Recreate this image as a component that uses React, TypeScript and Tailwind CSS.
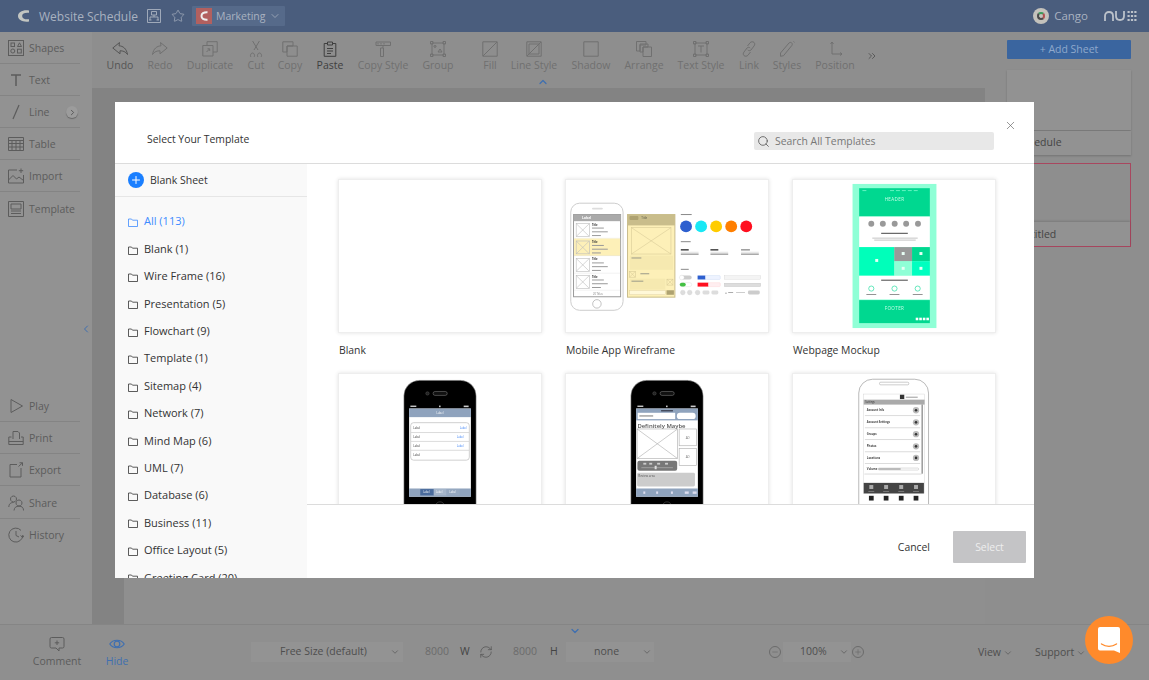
import React from 'react'
import { ChevronDown, ChevronRight, ChevronUp, ChevronLeft, ChevronsRight, Star, RefreshCw, X, Search, Plus, Minus } from 'lucide-react'

const sideTop = ['Shapes', 'Text', 'Line', 'Table', 'Import', 'Template']
const sideBottom = ['Play', 'Print', 'Export', 'Share', 'History']

const toolbar = [
  { label: 'Undo', w: 'w-[40px]', on: true },
  { label: 'Redo', w: 'w-[40px]' },
  { label: 'Duplicate', w: 'w-[60px]' },
  { label: 'Cut', w: 'w-[32px]' },
  { label: 'Copy', w: 'w-[36px]' },
  { label: 'Paste', w: 'w-[44px]', on: true, dark: true },
  { label: 'Copy Style', w: 'w-[62px]' },
  { label: 'Group', w: 'w-[48px]' },
  { label: 'Fill', w: 'w-[56px]' },
  { label: 'Line Style', w: 'w-[32px]' },
  { label: 'Shadow', w: 'w-[82px]' },
  { label: 'Arrange', w: 'w-[24px]' },
  { label: 'Text Style', w: 'w-[90px]' },
  { label: 'Link', w: 'w-[6px]' },
  { label: 'Styles', w: 'w-[70px]' },
  { label: 'Position', w: 'w-[26px]' },
]

const folders = ['All (113)', 'Blank (1)', 'Wire Frame (16)', 'Presentation (5)', 'Flowchart (9)', 'Template (1)', 'Sitemap (4)', 'Network (7)', 'Mind Map (6)', 'UML (7)', 'Database (6)', 'Business (11)', 'Office Layout (5)', 'Greeting Card (20)']

function SideIcon({ name }: { name: string }) {
  const p = { fill: 'none', stroke: 'currentColor', strokeWidth: 1 }
  return (
    <svg viewBox="0 0 16 16" className="w-4 h-4 shrink-0" {...p}>
      {name === 'Shapes' && (
        <>
          <rect x="0.5" y="0.5" width="15" height="15" />
          <rect x="3" y="3" width="3.5" height="3.5" />
          <path d="M11.5 2.8 L13.5 6.5 H9.5Z" />
          <circle cx="4.8" cy="11" r="2" />
          <rect x="9.5" y="9.2" width="3.8" height="3.8" />
        </>
      )}
      {name === 'Text' && <path d="M3 3 H13 M8 3 V14" strokeWidth="1.5" />}
      {name === 'Line' && <path d="M11 1 L5 15" strokeWidth="1.2" />}
      {name === 'Table' && <path d="M0.5 1.5 H15.5 V14.5 H0.5Z M0.5 4.5 H15.5 M0.5 7.5 H15.5 M0.5 11 H15.5 M4 4.5 V14.5 M8 4.5 V14.5 M12 4.5 V14.5" />}
      {name === 'Import' && <path d="M9 2 H0.5 V15 H15.5 V7 M0.5 12 L5 7.5 L8.5 11 L11 9 L15.5 12.5 M13 0.5 V5 M10.8 2.7 H15.2" />}
      {name === 'Template' && <path d="M0.5 0.5 H15.5 V15.5 H0.5Z M3 3 H13 V8 H3Z M3 10 H13 M3 12.5 H13" />}
      {name === 'Play' && <path d="M3 1.5 L14.5 8 L3 14.5Z" />}
      {name === 'Print' && <path d="M5 9 V1.5 H10 L11.5 3 V9 M3.5 7 H0.8 V14.5 H15.2 V7 H13 M0.8 11.5 H15.2" />}
      {name === 'Export' && <path d="M9 2.5 H2 V15 H13 V6 M10.5 4.5 L14.5 0.8 M11.5 0.8 H14.5 V3.8" />}
      {name === 'Share' && <path d="M5.5 1 a3 3 0 1 1 -0.01 0 M0.8 12 C1 8.5 3 7.5 5.5 7.5 M11 5 a3 3 0 1 1 -0.01 0 M6 15.5 C6.3 12.5 8 11.2 11 11.2 C14 11.2 15.4 12.5 15.6 15.5" />}
      {name === 'History' && <path d="M14.8 8 A7 7 0 1 1 13 3.4 M8 4 V8.5 L11 10 M12.5 8.5 L14.8 10.5 L16 8.5" />}
    </svg>
  )
}

function ToolIcon({ name }: { name: string }) {
  const p = { fill: 'none', stroke: 'currentColor', strokeWidth: 1 }
  return (
    <svg viewBox="0 0 16 16" className="w-4 h-4" {...p}>
      {name === 'Undo' && <path d="M0.8 7 L7.5 1.5 L7 4.8 C11 5 14.5 7.5 15.5 13.5 C13.5 10.5 11 9.8 8 9.8 L8 12.8Z" />}
      {name === 'Redo' && <path d="M15.2 7 L8.5 1.5 L9 4.8 C5 5 1.5 7.5 0.5 13.5 C2.5 10.5 5 9.8 8 9.8 L8 12.8Z" />}
      {name === 'Duplicate' && <path d="M5 4 V0.7 H15.2 V11 H11 M0.8 4.5 H11 V15 H0.8Z M4.5 11 L7.5 8 M5.5 7.8 H7.7 V10" />}
      {name === 'Cut' && <path d="M4 1 L10 11 M12 1 L6 11 M4.5 14 a2 2.5 0 1 0 0.01 0 M11.5 14 a2 2.5 0 1 0 0.01 0" transform="translate(0 -2)" />}
      {name === 'Copy' && <path d="M0.8 0.8 H11 V5 H5 V11 H0.8Z M5 5 H15.2 V15.2 H5Z" />}
      {name === 'Paste' && <path d="M5 2.5 H2.2 V15.3 H13.8 V2.5 H11 M5.5 1 H10.5 V4 H5.5Z M5 7.5 H11 M5 10 H11 M5 12.5 H9" />}
      {name === 'Copy Style' && <path d="M1 1 H15.5 V4.5 H1Z M3 2 V3.5 M6 2 V3.5 M9 2 V3.5 M8 4.5 V7 H5.5 V15.5 H8.5 V7" />}
      {name === 'Group' && <path d="M2 2 H14 V14 H2Z M0.5 0.5 H3 V3 H0.5Z M13 0.5 H15.5 V3 H13Z M0.5 13 H3 V15.5 H0.5Z M13 13 H15.5 V15.5 H13Z M5 4.5 a1 1 0 1 1 -0.01 0 M10 8 L12 11 H8Z" />}
      {name === 'Fill' && <path d="M0.8 0.8 H15.2 V15.2 H0.8Z M1 15 L15 1" />}
      {name === 'Line Style' && <path d="M0.8 0.8 H15.2 V15.2 H0.8Z M3 3 H13 V13 H3Z M1 15 L15 1" />}
      {name === 'Shadow' && <path d="M0.8 0.8 H15.2 V15.2 H0.8Z" />}
      {name === 'Arrange' && <path d="M0.5 0.5 H10 V4 H4 V10 H0.5Z M4 3 H12 V6 H7 V11 H4Z M7 6 H15.5 V15.5 H7Z" />}
      {name === 'Text Style' && <path d="M2 2 H14 V14 H2Z M0.5 0.5 H3 V3 H0.5Z M13 0.5 H15.5 V3 H13Z M0.5 13 H3 V15.5 H0.5Z M13 13 H15.5 V15.5 H13Z M5 5 H11 M8 5 V11.5" />}
      {name === 'Link' && <path d="M6.5 5 L9 1.8 C10 0.5 12 0.5 13 1.4 C14 2.3 14 3.8 13 5 L10 9 C9 10 7.5 9.8 6.8 9 M9.5 11 L7 14.2 C6 15.5 4 15.5 3 14.6 C2 13.7 2 12.2 3 11 L6 7 C7 6 8.5 6.2 9.2 7" />}
      {name === 'Styles' && <path d="M1.5 12 L10 2 C11 1 12.5 1.3 13 2.3 C13.5 3 13.3 4 12.7 4.7 L4.5 14.7 L1.5 15.3Z M14.5 0.5 L15.5 1.3" />}
      {name === 'Position' && <path d="M5 1 V13 H15 M3.5 3 L5 1 L6.5 3 M13 11.5 L15 13 L13 14.5" />}
    </svg>
  )
}

function Cross({ x, y, w, h, c = '#bbb' }: { x: number; y: number; w: number; h: number; c?: string }) {
  return (
    <g fill="none" stroke={c} strokeWidth="0.6">
      <rect x={x} y={y} width={w} height={h} />
      <path d={`M${x} ${y} L${x + w} ${y + h} M${x + w} ${y} L${x} ${y + h}`} />
    </g>
  )
}

function Lines({ x, y, w, c = '#999' }: { x: number; y: number; w: number[]; c?: string }) {
  return (
    <g fill={c}>
      {w.map((l, i) => (
        <rect key={i} x={x} y={y + i * 3.8} width={l} height="1" />
      ))}
    </g>
  )
}

const thumbClass = 'w-full h-full block blur-[0.35px]'

function WireThumb() {
  const rows = [41.7, 59.3, 77, 94.3]
  const colors = ['#2d5fcf', '#19e8f5', '#ffcc00', '#ff7f00', '#ff0f1f']
  return (
    <svg viewBox="0 0 204 154" className={thumbClass}>
      <rect x="4.5" y="23.5" width="53" height="108.5" rx="9" fill="#fff" stroke="#ccc" strokeWidth="1" />
      <rect x="26" y="28" width="11" height="2" rx="1" fill="#ddd" />
      <rect x="7.3" y="35" width="47.7" height="83.3" fill="#fff" stroke="#999" strokeWidth="1" />
      <rect x="7.3" y="35" width="47.7" height="6.7" fill="#aaa" />
      <text x="16" y="40" fontSize="3.4" fill="#fff" fontWeight="700">Label</text>
      {rows.map((y, i) => (
        <g key={y}>
          {i === 1 && <rect x="7.8" y={y} width="46.7" height="17.6" fill="#fdf0b8" />}
          <Cross x={10} y={y + 2.5} w={13.3} h={13} />
          <text x="26" y={y + 4.5} fontSize="2.6" fill="#333" fontWeight="700">Title</text>
          <Lines x={26} y={y + 6.5} w={[12, 16, 9]} />
          <path d={`M8 ${y + 17.4} H54.5`} stroke="#ddd" strokeWidth="0.4" />
        </g>
      ))}
      <text x="27" y="116.5" fontSize="2.6" fill="#777">20 Titles</text>
      <circle cx="31" cy="125.5" r="4.3" fill="#fff" stroke="#999" strokeWidth="0.6" />
      <rect x="62" y="35" width="48" height="83.7" fill="#fdf0b8" stroke="#c9bd8b" strokeWidth="1" />
      <rect x="62" y="35" width="48" height="11" fill="#c9bd8b" />
      <rect x="64" y="36.5" width="9" height="4" rx="1" fill="#aea271" />
      <text x="76" y="39.5" fontSize="3" fill="#554">Title</text>
      <Cross x={66} y={48.3} w={40} h={26.7} c="#d8cb97" />
      <rect x="64.3" y="76.7" width="43.7" height="14.3" fill="#f6e9b0" />
      <Lines x={66} y={78.5} w={[10]} c="#998" />
      <Cross x={64} y={92.5} w={6} h={6} c="#d8cb97" />
      <Lines x={75} y={94.5} w={[9]} c="#998" />
      <rect x="64.3" y="100" width="36" height="11" fill="#f6e9b0" />
      <Lines x={66} y={102} w={[12]} c="#998" />
      <Cross x={102} y={100.5} w={6} h={6} c="#d8cb97" />
      <rect x="64.3" y="111.7" width="36" height="4.6" fill="#fff8d8" stroke="#d8cb97" strokeWidth="0.4" />
      <rect x="101.5" y="111.7" width="7.5" height="4.6" fill="#aea271" />
      <Lines x={116} y={34.5} w={[11]} c="#888" />
      {colors.map((c, i) => (
        <circle key={c} cx={121.3 + i * 15.25} cy="47" r="6" fill={c} />
      ))}
      <Lines x={116} y={62} w={[10]} c="#888" />
      {[116, 146, 177].map((x, i) => (
        <g key={x}>
          <rect x={x} y="70" width={i === 2 ? 9 : 8} height="1.5" fill={i === 2 ? '#999' : '#444'} />
          <rect x={x} y="72.8" width="18" height="0.6" fill="#ccc" />
          <rect x={x} y="74.6" width="18" height="1" fill="#777" />
        </g>
      ))}
      <Lines x={116} y={90} w={[8]} c="#888" />
      <rect x="115" y="96.8" width="12" height="4" rx="2" fill="#ccc" />
      <circle cx="117" cy="98.8" r="2.4" fill="#fff" stroke="#ccc" strokeWidth="0.3" />
      <rect x="115" y="104" width="12" height="4" rx="2" fill="#fff" stroke="#ccc" strokeWidth="0.3" />
      <rect x="115" y="104" width="6" height="4" rx="2" fill="#44c044" />
      <rect x="133" y="96.8" width="8" height="4" fill="#2d5fcf" />
      <rect x="141" y="96.8" width="15" height="4" rx="1" fill="#eef3ff" stroke="#b9ccee" strokeWidth="0.3" />
      <rect x="133" y="104" width="11" height="4" fill="#ff0f1f" />
      <rect x="144" y="104" width="12" height="4" rx="1" fill="#ffeef0" stroke="#ffc0c4" strokeWidth="0.3" />
      <rect x="160" y="97" width="37" height="3.6" fill="#f4f4f4" stroke="#ccc" strokeWidth="0.3" />
      <rect x="160" y="104.5" width="37" height="3.6" fill="#ddd" stroke="#bbb" strokeWidth="0.3" />
      {[118, 125, 133].map((x) => (
        <circle key={x} cx={x} cy="114" r="2.4" fill="#ddd" stroke="#ccc" strokeWidth="0.3" />
      ))}
      <rect x="138" y="112" width="7" height="4" rx="1.5" fill="#ddd" />
      <rect x="147" y="112" width="7" height="4" rx="1.5" fill="#ddd" />
      <rect x="161" y="114" width="1.5" height="1.5" fill="#bbb" />
      <Lines x={164} y={113.5} w={[5]} c="#aaa" />
      <rect x="172" y="113.5" width="9" height="1" fill="#ccc" />
      <rect x="184" y="112" width="12" height="4" rx="1.5" fill="#ccc" />
    </svg>
  )
}

function WebThumb() {
  return (
    <svg viewBox="0 0 204 154" className={thumbClass}>
      <rect x="60" y="4" width="85" height="146" fill="#8fffd6" />
      <rect x="66.7" y="8.3" width="71.6" height="28.7" fill="#00d890" />
      {[70, 98, 104, 110, 116, 122].map((x) => (
        <rect key={x} x={x} y="10.5" width="4" height="0.7" fill="#8fffd6" />
      ))}
      <text x="102.5" y="21.5" fontSize="4.6" fill="#c8ffe8" textAnchor="middle" letterSpacing="0.4">HEADER</text>
      <rect x="66.7" y="37" width="71.6" height="31" fill="#fff" />
      {[79, 90.7, 102.7, 114.3, 126.3].map((x) => (
        <circle key={x} cx={x} cy="44.3" r="3" fill="#999" />
      ))}
      <rect x="89" y="53.5" width="27" height="1" fill="#444" />
      <rect x="80" y="58.5" width="46" height="0.7" fill="#aaa" />
      <rect x="82" y="60.5" width="42" height="0.7" fill="#aaa" />
      <rect x="66.7" y="68" width="35.6" height="29" fill="#00ffba" />
      <rect x="102.3" y="68" width="18" height="14.3" fill="#999" />
      <rect x="120.3" y="68" width="18" height="14.3" fill="#00d890" />
      <rect x="102.3" y="82.3" width="18" height="14.7" fill="#8fffd6" />
      <rect x="120.3" y="82.3" width="18" height="14.7" fill="#00ffc0" />
      {[[84.5, 80], [111.3, 73], [129.3, 73], [111.3, 88], [129.3, 88]].map(([x, y]) => (
        <rect key={`${x}-${y}`} x={x - 1.5} y={y} width="3" height="3" fill="#e8fff6" />
      ))}
      <rect x="66.7" y="97" width="71.6" height="24" fill="#fff" />
      <rect x="89" y="101" width="27" height="1" fill="#444" />
      {[79, 102.5, 126].map((x) => (
        <g key={x}>
          <circle cx={x} cy="110" r="2.6" fill="none" stroke="#00d890" strokeWidth="0.6" />
          <rect x={x - 5} y="115.5" width="10" height="0.8" fill="#777" />
        </g>
      ))}
      <rect x="66.7" y="121.7" width="71.6" height="23.3" fill="#00d890" />
      <text x="102.5" y="131.5" fontSize="4.6" fill="#c8ffe8" textAnchor="middle" letterSpacing="0.4">FOOTER</text>
      {[124, 127.6, 131.2, 134.8].map((x) => (
        <rect key={x} x={x} y="139.5" width="2.6" height="2.6" fill="#fff" />
      ))}
    </svg>
  )
}

function PhoneShell() {
  return (
    <>
      <rect x="65.3" y="6.3" width="73.4" height="160" rx="16" fill="#000" stroke="#ddd" strokeWidth="0.5" />
      <circle cx="89.3" cy="19.7" r="1.7" fill="#222" stroke="#555" strokeWidth="0.5" />
      <rect x="95" y="17.7" width="14.3" height="4" rx="2" fill="#111" stroke="#888" strokeWidth="0.5" />
      <rect x="72" y="32" width="6" height="1.4" fill="#ccc" />
      <rect x="101" y="32" width="1.6" height="1.6" fill="#ccc" />
      <rect x="126" y="32" width="5" height="1.6" fill="#ccc" />
      <rect x="70.7" y="35" width="62.6" height="89.3" fill="#fff" />
    </>
  )
}

function SettingsThumb() {
  const rows = [['Account Info', 36.7], ['Account Settings', 49], ['Groups', 61], ['Photos', 73.3], ['Locations', 85]] as const
  return (
    <svg viewBox="0 0 204 154" className={thumbClass}>
      <rect x="66.3" y="5.3" width="70.7" height="160" rx="14" fill="#fff" stroke="#888" strokeWidth="0.6" />
      <rect x="87.3" y="8.3" width="29.7" height="2.7" rx="1.3" fill="#fff" stroke="#999" strokeWidth="0.5" />
      <rect x="71.3" y="20.3" width="61.7" height="100.7" fill="#fff" stroke="#ccc" strokeWidth="0.4" />
      <rect x="108" y="21" width="4.4" height="4.4" fill="#333" />
      <rect x="114" y="23" width="12" height="1" fill="#999" />
      <rect x="71.3" y="26" width="61.7" height="5" fill="#aaa" />
      <text x="73" y="29.7" fontSize="2.6" fill="#333">Settings</text>
      {rows.map(([t, y]) => (
        <g key={t}>
          <text x="74.5" y={y + 1} fontSize="2.8" fontWeight="700" fill="#444">{t}</text>
          <circle cx="124.3" cy={y} r="3.2" fill="#bbb" />
          <circle cx="124.3" cy={y} r="1.3" fill="#333" />
          <rect x="72.5" y={y + 5.2} width="56" height="0.7" fill="#ccc" />
        </g>
      ))}
      <text x="74.5" y="97.2" fontSize="2.8" fontWeight="700" fill="#444">Volume</text>
      <rect x="86" y="95.3" width="41" height="2" rx="1" fill="#fff" stroke="#aaa" strokeWidth="0.4" />
      <rect x="86" y="95.3" width="23" height="2" rx="1" fill="#bbb" />
      <rect x="72" y="101" width="58" height="0.7" fill="#ccc" />
      <rect x="130" y="31" width="1" height="70" fill="#666" />
      <rect x="71.3" y="110.3" width="61" height="10.7" fill="#444" />
      {[79, 94, 109.3, 124.3].map((x) => (
        <g key={x}>
          <rect x={x - 2} y="112.5" width="4" height="4" fill="#aaa" />
          <rect x={x - 3} y="118.5" width="6" height="0.8" fill="#888" />
          <rect x={x - 2.4} y="123.4" width="4.8" height="4.8" fill="#222" />
        </g>
      ))}
    </svg>
  )
}

function IphoneListThumb() {
  return (
    <svg viewBox="0 0 204 154" className={thumbClass}>
      <PhoneShell />
      <rect x="70.7" y="35" width="62.6" height="8.7" fill="#8fa3bd" />
      <text x="102" y="40.5" fontSize="2.8" fill="#fff" textAnchor="middle">Label</text>
      <rect x="72.3" y="49.3" width="59.4" height="38" rx="3" fill="#fff" stroke="#bbb" strokeWidth="0.7" />
      {[59.3, 68.3, 77.3].map((y) => (
        <path key={y} d={`M72.5 ${y} H131.5`} stroke="#ccc" strokeWidth="0.7" />
      ))}
      {[55.5, 65, 74, 83].map((y, i) => (
        <g key={y}>
          <text x="75" y={y} fontSize="2.8" fill="#333">Label</text>
          {i < 3 && <text x={i === 0 ? 122 : 119} y={y} fontSize="2.8" fill="#3b82f6">Label</text>}
        </g>
      ))}
      <rect x="70.7" y="116" width="62.6" height="8.3" fill="#8fa3bd" />
      <rect x="82" y="116.6" width="13.7" height="6.4" fill="#4a6b9c" />
      <rect x="95.7" y="116.6" width="13" height="6.4" fill="#a5b5ca" />
      <rect x="108.7" y="116.6" width="13.3" height="6.4" fill="#96a8c0" />
      {[85, 98, 111.5].map((x) => (
        <text key={x} x={x} y="120.8" fontSize="2.6" fill="#fff">Label</text>
      ))}
      <circle cx="102" cy="134" r="4.5" fill="#000" stroke="#666" strokeWidth="0.5" />
    </svg>
  )
}

function IphoneMusicThumb() {
  return (
    <svg viewBox="0 0 204 154" className={thumbClass}>
      <PhoneShell />
      <rect x="70.7" y="35" width="62.6" height="12" fill="#8fa3bd" />
      <rect x="96" y="36.8" width="12" height="1" fill="#223" />
      <rect x="72.3" y="39.3" width="38" height="6.4" fill="#fff" />
      <rect x="74" y="42" width="14" height="1" fill="#777" />
      <rect x="112" y="39.3" width="19" height="6.4" rx="3" fill="#fff" />
      <text x="72" y="54.5" fontSize="6" fontWeight="600" fill="#555">Definitely Maybe</text>
      <Cross x={71.7} y={55.7} w={41} h={30} c="#aaa" />
      <rect x="114.3" y="55.7" width="17.7" height="17" fill="#fff" stroke="#aaa" strokeWidth="0.6" />
      <text x="123" y="65.5" fontSize="3" fill="#777" textAnchor="middle">AD</text>
      <rect x="114.3" y="75.3" width="17.7" height="17.4" fill="#fff" stroke="#aaa" strokeWidth="0.6" />
      <text x="123" y="85" fontSize="3" fill="#777" textAnchor="middle">AD</text>
      <rect x="72" y="88" width="40.3" height="10" rx="2" fill="#777" />
      <rect x="76" y="94.6" width="32" height="0.8" fill="#aaa" />
      <rect x="89.5" y="93" width="2" height="3.5" fill="#ddd" />
      {[78, 84, 92, 100].map((x) => (
        <rect key={x} x={x} y="90" width="3" height="1.8" fill="#ccc" />
      ))}
      <rect x="71.7" y="100" width="58.6" height="14" rx="1.5" fill="#ccc" />
      <text x="73" y="104" fontSize="3" fill="#555">Review area</text>
      <rect x="70.7" y="116" width="62.6" height="8.3" fill="#8fa3bd" />
      {[79, 92, 107, 121, 132].map((x, i) => (
        <rect key={x} x={x - (i === 4 ? 4 : 1)} y="119" width={i > 2 ? 4 : 2} height="2.4" fill="#dde" />
      ))}
      <circle cx="102" cy="134" r="4.5" fill="#000" stroke="#666" strokeWidth="0.5" />
    </svg>
  )
}

const templates = [
  { id: 'blank', name: 'Blank', thumb: null },
  { id: 'wire', name: 'Mobile App Wireframe', thumb: <WireThumb /> },
  { id: 'web', name: 'Webpage Mockup', thumb: <WebThumb /> },
  { id: 'list', name: '', thumb: <IphoneListThumb /> },
  { id: 'music', name: '', thumb: <IphoneMusicThumb /> },
  { id: 'settings', name: '', thumb: <SettingsThumb /> },
]

function TemplateModal() {
  return (
    <div className="absolute left-[115px] top-[102px] w-[919px] h-[476px] bg-white flex flex-col text-[10.4px] text-[#333]">
      <div className="h-[62px] shrink-0 border-b border-[#dcdcdc] flex items-center pt-[17px] relative">
        <span className="ml-[32px] mb-[2px]">Select Your Template</span>
        <div className="ml-auto mr-[40px] w-[240px] h-[18px] bg-[#e8e8e8] rounded-[2px] flex items-center pl-[3px] text-[#777]">
          <Search className="w-[13px] h-[13px] text-[#555] mr-[5px]" strokeWidth={1.5} />
          <span className="mt-[2px]">Search All Templates</span>
        </div>
        <button className="absolute right-[17px] top-[17px] text-[#666]">
          <X className="w-[13px] h-[13px]" strokeWidth={1.25} />
        </button>
      </div>
      <div className="flex flex-1 min-h-0">
        <div className="w-[192px] shrink-0 bg-[#f9f9f9] overflow-hidden">
          <div className="h-[33px] border-b border-[#e6e6e6] flex items-center pl-[13px] text-[10.5px]">
            <span className="w-4 h-4 rounded-full bg-[#1a7fff] text-white flex items-center justify-center mr-[6px]">
              <Plus className="w-3 h-3" strokeWidth={2} />
            </span>
            <span className="mt-[2px]">Blank Sheet</span>
          </div>
          <div className="pt-[11px] text-[11px]">
            {folders.map((f, i) => (
              <div key={f} className={`h-[27.4px] flex items-center pl-[13px] ${i === 0 ? 'text-[#3d8bff]' : ''}`}>
                <svg viewBox="0 0 10 9" className="w-[10px] h-[9px] mr-[6px] mt-[2px]" fill="none" stroke="currentColor" strokeWidth="0.8">
                  <path d="M0.5 1 H3.5 L4.5 2.2 H9.5 V8.5 H0.5Z" />
                </svg>
                {f}
              </div>
            ))}
          </div>
        </div>
        <div className="flex-1 flex flex-col min-w-0">
          <div className="h-[341px] shrink-0 border-b border-[#dcdcdc] overflow-hidden pl-[31px] pt-[15px]">
            <div className="grid grid-cols-[204px_204px_204px] gap-x-[23px]">
              {templates.map((t) => (
                <div key={t.id} className="h-[194px]">
                  <div className="h-[154px] bg-white border border-[#eeeeee] shadow-[0_0_4px_rgba(0,0,0,0.12)] overflow-hidden">
                    {t.thumb}
                  </div>
                  {t.name && <div className="pt-[10px] pl-px leading-[15px]">{t.name}</div>}
                </div>
              ))}
            </div>
          </div>
          <div className="flex-1 flex items-center justify-end pr-2 pt-[10px] gap-[23px]">
            <span className="mt-[3px]">Cancel</span>
            <button className="w-[73px] h-[32px] bg-[#c4c4c6] text-[#eeeeee] rounded-[1px] pt-[2px]">Select</button>
          </div>
        </div>
      </div>
    </div>
  )
}

export default function App() {
  return (
    <div className="relative w-[1149px] h-[680px] overflow-hidden flex flex-col bg-[#838383] font-['Open_Sans',sans-serif] text-[10.5px] text-[#5c5c5c]">
      {/* top bar */}
      <div className="h-[32px] shrink-0 bg-[#4a5d7d] flex items-center text-[#a9b2c0]">
        <svg viewBox="0 0 12 14" className="w-[11px] h-[14px] ml-[18px] text-[#c3c6c2]" fill="currentColor">
          <path d="M12 1 C5 0 0 3 0 7 C0 11 5 14 12 13 L12 10.5 C8 11 4.5 10 4.5 7 C4.5 4 8 3 12 3.5Z" />
        </svg>
        <span className="ml-[10px] mt-[2px] text-[12px] leading-none">Website Schedule</span>
        <svg viewBox="0 0 14 14" className="w-[14px] h-[14px] ml-[9px]" fill="none" stroke="currentColor" strokeWidth="0.9">
          <path d="M0.5 0.5 H13.5 V13.5 H0.5Z M4.5 2.5 H9.5 V6 H4.5Z M7 6 V8 M3 11 V8 H11 V11 M2 11 H4.5 M9.5 11 H12" />
        </svg>
        <Star className="w-[14px] h-[14px] ml-[10px]" strokeWidth={1.2} />
        <div className="ml-[7px] w-[93px] h-[20px] bg-[#566a8a] flex items-center pl-[4px] rounded-[1px]">
          <span className="w-4 h-4 bg-[#b2605f] flex items-center justify-center">
            <svg viewBox="0 0 8 10" className="w-2 h-[10px] text-[#eee]" fill="none" stroke="currentColor" strokeWidth="2">
              <path d="M7.5 1.2 C3.5 1 1.5 2.5 1.5 5 C1.5 7.5 3.5 9 7.5 8.8" />
            </svg>
          </span>
          <span className="ml-[4px] mt-[2px]">Marketing</span>
          <ChevronDown className="w-3 h-3 ml-[4px]" strokeWidth={1.5} />
        </div>
        <div className="ml-auto w-4 h-4 rounded-full bg-[#c4c2bc] flex items-center justify-center">
          <span className="w-[8px] h-[8px] rounded-full border-2 border-[#4a4a4a] border-t-[#3a9a5a] border-r-[#b05050]" />
        </div>
        <span className="ml-[5px] text-[11.5px]">Cango</span>
        <svg viewBox="0 0 33 10" className="w-[33px] h-[10px] ml-[16px] mr-[12px] text-[#bcc2ca]" fill="none" stroke="currentColor" strokeWidth="1.8">
          <path d="M1 10 V5 C1 2.5 2.5 1 5 1 C7.5 1 9 2.5 9 5 V10 M12 0 V5 C12 7.5 13.5 9 16 9 C18.5 9 20 7.5 20 5 V0" />
          <path d="M23.5 1 H32.5 M23.5 5 H32.5 M23.5 9 H32.5" strokeWidth="2" strokeDasharray="2.2 1.2" />
        </svg>
      </div>

      <div className="flex flex-1 min-h-0">
        {/* left column */}
        <div className="w-[92px] shrink-0 bg-[#929292] relative">
          {sideTop.map((s, i) => (
            <div key={s} className={`h-[32px] w-[80px] flex items-center pl-[8px] pt-px gap-[5px] relative ${i < sideTop.length - 1 ? 'border-b border-[#848484]' : ''}`}>
              <SideIcon name={s} />
              <span className="mt-[2px]">{s}</span>
              {s === 'Line' && (
                <span className="absolute left-[66px] top-[10px] w-3 h-3 rounded-full bg-[#9c9c9c] shadow-[0_1px_1px_rgba(0,0,0,0.3)] flex items-center justify-center">
                  <ChevronRight className="w-[9px] h-[9px] text-[#444]" strokeWidth={2} />
                </span>
              )}
            </div>
          ))}
          <div className="h-[165.5px]" />
          {sideBottom.map((s, i) => (
            <div key={s} className={`h-[32.3px] w-[80px] flex items-center pl-[8px] pt-px gap-[5px] ${i < sideBottom.length - 1 ? 'border-b border-[#848484]' : ''}`}>
              <SideIcon name={s} />
              <span className="mt-[2px]">{s}</span>
            </div>
          ))}
          <ChevronLeft className="absolute left-[80px] top-[291px] w-3 h-3 text-[#3f6fb0]" strokeWidth={2} />
        </div>

        {/* toolbar + canvas */}
        <div className="flex-1 min-w-0 flex flex-col">
          <div className="h-[56px] shrink-0 bg-[#8e8e8e] flex pl-[8px] pt-[9px] relative text-[#707070] w-[893px]">
            {toolbar.map((t) => (
              <div key={t.label} className={`${t.w} flex flex-col items-center shrink-0 whitespace-nowrap ${t.on ? (t.dark ? 'text-[#3f3f3f]' : 'text-[#555555]') : ''}`}>
                <ToolIcon name={t.label} />
                <span className="leading-[15px] mt-px">{t.label}</span>
              </div>
            ))}
            <ChevronsRight className="w-3 h-3 ml-[18px] mt-[9px] text-[#444]" strokeWidth={1.4} />
            <ChevronUp className="absolute left-[445px] top-[44px] w-3 h-3 text-[#3f6fb0]" strokeWidth={2.5} />
          </div>
          <div className="flex flex-1 min-h-0">
            <div className="w-[893px] shrink-0 pl-[32px] pt-[14px]">
              <div className="h-full bg-[#8f8f8f]" />
            </div>
            <div className="flex-1" />
          </div>
        </div>

        {/* right panel */}
        <div className="absolute left-[985px] top-[32px] w-[164px] h-[592px] bg-[#8e8e8e] pl-[22px] pr-[18px] pt-[8px] text-[#444]">
          <div className="h-[19px] bg-[#3a659f] text-[#8fa9cc] rounded-[1px] text-center leading-[19px]">+ Add Sheet</div>
          <div className="mt-[11px] h-[60px] bg-[#929292] shadow-[0_1px_2px_rgba(0,0,0,0.2)]" />
          <div className="mt-px h-[24px] bg-[#929292] shadow-[0_1px_2px_rgba(0,0,0,0.2)] leading-[22px] pl-[10px]">Schedule</div>
          <div className="mt-[8px] h-[84px] border border-[#a8475f] flex flex-col">
            <div className="flex-1" />
            <div className="h-[24px] bg-[#929292] leading-[24px] pl-[9px] shadow-[0_-1px_2px_rgba(0,0,0,0.15)]">Untitled</div>
          </div>
        </div>
      </div>

      {/* bottom bar */}
      <div className="h-[56px] shrink-0 bg-[#8f8f8f] border-t border-[#858585] flex relative">
        <div className="w-[46px]" />
        <div className="w-[22px] flex flex-col items-center pt-[11px] whitespace-nowrap">
          <svg viewBox="0 0 16 16" className="w-4 h-4 shrink-0" fill="none" stroke="currentColor" strokeWidth="1">
            <path d="M2.5 1.5 H13.5 A1.5 1.5 0 0 1 15 3 V10.5 A1.5 1.5 0 0 1 13.5 12 H10 V15 L7 12 H2.5 A1.5 1.5 0 0 1 1 10.5 V3 A1.5 1.5 0 0 1 2.5 1.5 Z M8 4.5 V9 M5.8 6.8 H10.2" />
          </svg>
          <span className="mt-[2px]">Comment</span>
        </div>
        <div className="w-[22px] ml-[38px] flex flex-col items-center pt-[11px] text-[#3f6fb0]">
          <svg viewBox="0 0 16 12" className="w-4 h-3 my-[2px] shrink-0" fill="none" stroke="currentColor" strokeWidth="1.2">
            <path d="M0.8 6 C4 1 12 1 15.2 6 C12 11 4 11 0.8 6Z" />
            <circle cx="8" cy="6" r="2.8" />
          </svg>
          <span className="mt-[2px]">Hide</span>
        </div>
        <div className="ml-[123px] mt-[17px] w-[152px] h-[20px] bg-[#939393] flex items-center pl-[29px] text-[#4e4e4e]">
          Free Size (default)
          <ChevronDown className="w-[10px] h-[10px] ml-auto mr-[3px]" strokeWidth={1.5} />
        </div>
        <div className="ml-[22px] mt-[17px] w-[24px] h-[20px] flex items-center text-[#6b6b6b]">8000</div>
        <div className="ml-[11px] mt-[17px] w-[10px] h-[20px] flex items-center text-[#444]">W</div>
        <RefreshCw className="ml-[9px] mt-[20px] w-[14px] h-[14px] text-[#555]" strokeWidth={1.3} />
        <div className="ml-[20px] mt-[17px] w-[24px] h-[20px] flex items-center text-[#6b6b6b]">8000</div>
        <div className="ml-[13px] mt-[17px] w-[8px] h-[20px] flex items-center text-[#444]">H</div>
        <div className="ml-[8px] mt-[17px] w-[88px] h-[20px] bg-[#939393] flex items-center pl-[28px] text-[#4e4e4e]">
          none
          <ChevronDown className="w-[10px] h-[10px] ml-auto mr-[2px]" strokeWidth={1.5} />
        </div>
        <span className="ml-[115px] mt-[21px] w-3 h-3 rounded-full border border-[#6b6b6b] flex items-center justify-center text-[#6b6b6b] shrink-0">
          <Minus className="w-2 h-2" strokeWidth={2} />
        </span>
        <div className="ml-[2px] mt-[17px] w-[68px] h-[20px] bg-[#939393] flex items-center pl-[17px] text-[#4e4e4e]">
          100%
          <ChevronDown className="w-[10px] h-[10px] ml-auto mr-[2px]" strokeWidth={1.5} />
        </div>
        <span className="ml-px mt-[21px] w-3 h-3 rounded-full border border-[#6b6b6b] flex items-center justify-center text-[#6b6b6b] shrink-0">
          <Plus className="w-2 h-2" strokeWidth={2} />
        </span>
        <div className="ml-[114px] mt-[18px] h-[20px] flex items-center text-[#4e4e4e]">
          View
          <ChevronDown className="w-[10px] h-[10px] ml-[2px]" strokeWidth={1.5} />
        </div>
        <div className="ml-[22px] mt-[18px] h-[20px] flex items-center text-[#4e4e4e]">
          Support
          <ChevronDown className="w-[10px] h-[10px] ml-[2px]" strokeWidth={1.5} />
        </div>
        <ChevronDown className="absolute left-[569px] top-[0px] w-3 h-3 text-[#3f6fb0]" strokeWidth={2.5} />
      </div>

      <TemplateModal />

      {/* chat bubble */}
      <div className="absolute left-[1085px] top-[616px] w-[48px] h-[48px] rounded-full bg-[#ff8a2b] flex items-center justify-center">
        <svg viewBox="0 0 22 26" className="w-[22px] h-[26px]">
          <path d="M2 0 H20 A2 2 0 0 1 22 2 V26 L16 23.5 H2 A2 2 0 0 1 0 21.5 V2 A2 2 0 0 1 2 0Z" fill="#fff" />
          <path d="M3.5 17 C8 20 14 20 18.5 17" fill="none" stroke="#ff8a2b" strokeWidth="1.4" strokeLinecap="round" />
        </svg>
      </div>
    </div>
  )
}
